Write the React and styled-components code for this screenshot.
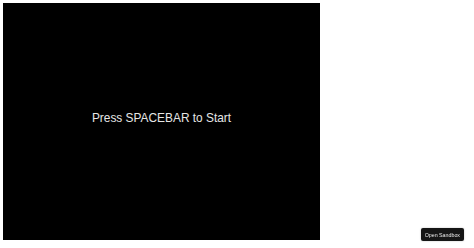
import React from 'react';
import styled, { createGlobalStyle } from 'styled-components';

const Global = createGlobalStyle`
  html, body {
    margin: 0;
    padding: 0;
    background: #fff;
  }
  body {
    font-family: "Liberation Sans", Arial, sans-serif;
  }
`;

const Page = styled.main`
  width: 474px;
  height: 248px;
  padding: 3px;
  box-sizing: border-box;
`;

const Screen = styled.div`
  width: 317px;
  height: 237px;
  background: #000;
  display: flex;
  align-items: center;
  justify-content: center;
  padding-bottom: 8px;
  box-sizing: border-box;
`;

const Prompt = styled.p`
  margin: 0;
  color: #e6e6e6;
  font-size: 11.9px;
  transform: scaleY(1.06);
`;

const SandboxButton = styled.button`
  position: fixed;
  right: 10px;
  bottom: 7px;
  height: 13px;
  padding: 0 4px;
  border: none;
  border-radius: 2px;
  background: #151515;
  color: #e8e8e8;
  font-family: "Liberation Sans", Arial, sans-serif;
  font-size: 5.3px;
  box-shadow: 0 0 2px rgba(0, 0, 0, 0.25);
  cursor: pointer;
`;

export default function App() {
  return (
    <>
      <Global />
      <Page>
        <Screen>
          <Prompt>Press SPACEBAR to Start</Prompt>
        </Screen>
      </Page>
      <SandboxButton>Open Sandbox</SandboxButton>
    </>
  );
}
